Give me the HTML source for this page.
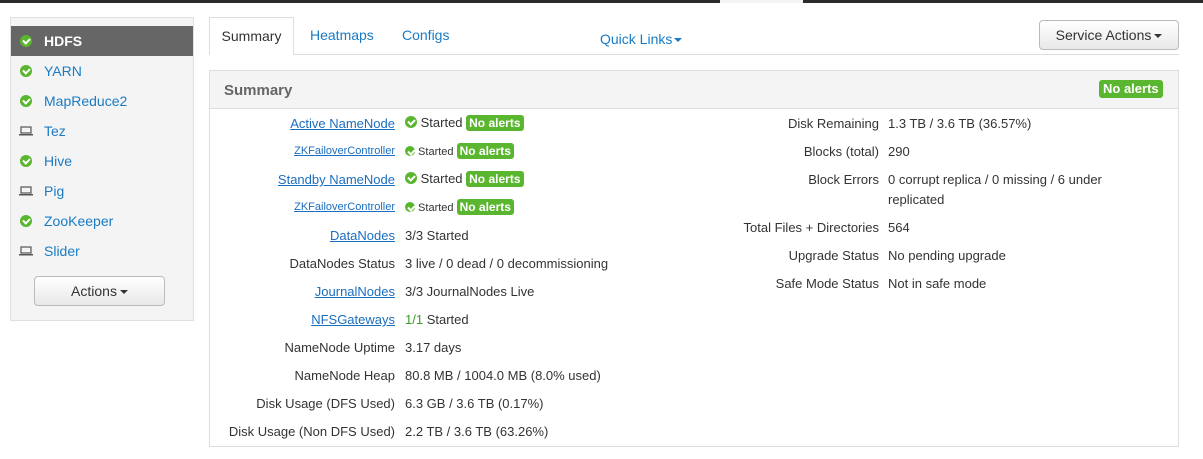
<!DOCTYPE html>
<html><head><style>
*{margin:0;padding:0;box-sizing:border-box}
body{width:1203px;height:459px;background:#fff;font-family:"Liberation Sans",Arial,sans-serif;color:#333;position:relative;overflow:hidden;font-size:13px}
.a{position:absolute;white-space:nowrap}
.lnk{color:#1a6ebf;text-decoration:underline}
.chk{display:inline-block;width:12px;height:12px;border-radius:50%;background:#5ab52f;position:relative;vertical-align:-1px}
.chk:after{content:"";position:absolute;left:3px;top:2.5px;width:5px;height:3px;border-left:2px solid #fff;border-bottom:2px solid #fff;transform:rotate(-45deg)}
.badge{display:inline-block;background:#5ab52f;color:#fff;font-weight:bold;font-size:12px;padding:1px 3px;border-radius:3px;line-height:14px}
.side{position:absolute;left:10px;top:17px;width:184px;height:304px;background:#f4f4f4;border:1px solid #e0e0e0}
.si{position:absolute;left:0;width:182px;height:30px;line-height:30px;font-size:14px;color:#1a7bc4;padding-left:33px}
.si .ic{position:absolute;left:9px;top:9px}
.lap{position:absolute;left:8px;top:10px;width:14px;height:10px}
.btn{position:absolute;border:1px solid #bbb;border-radius:4px;background:linear-gradient(#fff,#e8e8e8);color:#333;font-size:14px;text-align:center}
.caret{display:inline-block;border-left:4px solid transparent;border-right:4px solid transparent;border-top:4px solid #333;vertical-align:2px;margin-left:3px}
.l{position:absolute;text-align:right;white-space:nowrap;left:0;width:395px}
.r{position:absolute;text-align:right;white-space:nowrap;left:0;width:879px}
.v{position:absolute;white-space:nowrap}
</style></head><body>
<div class="a" style="left:0;top:0;width:1203px;height:3px;background:#2b2b2b"></div>
<div class="a" style="left:720px;top:0;width:83px;height:3px;background:#f4f4f4"></div>

<div class="side">
 <div class="si" style="top:8px;background:#666;color:#fff;font-weight:bold"><span class="chk ic"></span>HDFS</div>
 <div class="si" style="top:38px"><span class="chk ic"></span>YARN</div>
 <div class="si" style="top:68px"><span class="chk ic"></span>MapReduce2</div>
 <div class="si" style="top:98px"><svg class="lap" viewBox="0 0 14 10"><rect x="2" y="1" width="10" height="6" fill="none" stroke="#555" stroke-width="1.2"/><rect x="0" y="8" width="14" height="1.5" fill="#555"/></svg>Tez</div>
 <div class="si" style="top:128px"><span class="chk ic"></span>Hive</div>
 <div class="si" style="top:158px"><svg class="lap" viewBox="0 0 14 10"><rect x="2" y="1" width="10" height="6" fill="none" stroke="#555" stroke-width="1.2"/><rect x="0" y="8" width="14" height="1.5" fill="#555"/></svg>Pig</div>
 <div class="si" style="top:188px"><span class="chk ic"></span>ZooKeeper</div>
 <div class="si" style="top:218px"><svg class="lap" viewBox="0 0 14 10"><rect x="2" y="1" width="10" height="6" fill="none" stroke="#555" stroke-width="1.2"/><rect x="0" y="8" width="14" height="1.5" fill="#555"/></svg>Slider</div>
 <div class="btn" style="left:23px;top:258px;width:131px;height:30px;line-height:28px">Actions<span class="caret"></span></div>
</div>

<div class="a" style="left:209px;top:54px;width:970px;height:1px;background:#ddd"></div>
<div class="a" style="left:209px;top:17px;width:85px;height:38px;border:1px solid #ddd;border-bottom:none;background:#fff;font-size:14px;line-height:36px;text-align:center;color:#333">Summary</div>
<div class="a" style="left:310px;top:27px;font-size:14px;color:#1a7bc4">Heatmaps</div>
<div class="a" style="left:402px;top:27px;font-size:14px;color:#1a7bc4">Configs</div>
<div class="a" style="left:600px;top:31px;font-size:14px;color:#1a7bc4">Quick Links<span class="caret" style="border-top-color:#1a7bc4;margin-left:2px"></span></div>
<div class="btn" style="left:1039px;top:20px;width:140px;height:30px;line-height:28px">Service Actions<span class="caret"></span></div>

<div class="a" style="left:209px;top:70px;width:970px;height:377px;border:1px solid #ddd"></div>
<div class="a" style="left:210px;top:71px;width:968px;height:38px;background:#f4f4f4;border-bottom:1px solid #ddd"></div>
<div class="a" style="left:224px;top:82px;font-size:15px;font-weight:bold;color:#666">Summary</div>
<div class="a" style="left:1099px;top:80px"><span class="badge" style="font-size:13px;padding:2px 4px">No alerts</span></div>

<div class="l" style="top:116px"><span class="lnk">Active NameNode</span></div>
<div class="v" style="left:405px;top:115px"><span class="chk"></span> Started <span class="badge">No alerts</span></div>
<div class="l" style="top:145px;font-size:11px"><span class="lnk">ZKFailoverController</span></div>
<div class="v" style="left:405px;top:143px;font-size:11px"><span class="chk" style="width:10px;height:10px"></span> Started <span class="badge">No alerts</span></div>
<div class="l" style="top:172px"><span class="lnk">Standby NameNode</span></div>
<div class="v" style="left:405px;top:171px"><span class="chk"></span> Started <span class="badge">No alerts</span></div>
<div class="l" style="top:201px;font-size:11px"><span class="lnk">ZKFailoverController</span></div>
<div class="v" style="left:405px;top:199px;font-size:11px"><span class="chk" style="width:10px;height:10px"></span> Started <span class="badge">No alerts</span></div>
<div class="l" style="top:228px"><span class="lnk">DataNodes</span></div>
<div class="v" style="left:405px;top:228px">3/3 Started</div>
<div class="l" style="top:256px">DataNodes Status</div>
<div class="v" style="left:405px;top:256px">3 live / 0 dead / 0 decommissioning</div>
<div class="l" style="top:284px"><span class="lnk">JournalNodes</span></div>
<div class="v" style="left:405px;top:284px">3/3 JournalNodes Live</div>
<div class="l" style="top:312px"><span class="lnk">NFSGateways</span></div>
<div class="v" style="left:405px;top:312px"><span style="color:#3a9a2a">1/1</span> Started</div>
<div class="l" style="top:340px">NameNode Uptime</div>
<div class="v" style="left:405px;top:340px">3.17 days</div>
<div class="l" style="top:368px">NameNode Heap</div>
<div class="v" style="left:405px;top:368px">80.8 MB / 1004.0 MB (8.0% used)</div>
<div class="l" style="top:396px">Disk Usage (DFS Used)</div>
<div class="v" style="left:405px;top:396px">6.3 GB / 3.6 TB (0.17%)</div>
<div class="l" style="top:424px">Disk Usage (Non DFS Used)</div>
<div class="v" style="left:405px;top:424px">2.2 TB / 3.6 TB (63.26%)</div>

<div class="r" style="top:116px">Disk Remaining</div>
<div class="v" style="left:888px;top:116px">1.3 TB / 3.6 TB (36.57%)</div>
<div class="r" style="top:144px">Blocks (total)</div>
<div class="v" style="left:888px;top:144px">290</div>
<div class="r" style="top:172px">Block Errors</div>
<div class="v" style="left:888px;top:170px;line-height:20px">0 corrupt replica / 0 missing / 6 under<br>replicated</div>
<div class="r" style="top:220px">Total Files + Directories</div>
<div class="v" style="left:888px;top:220px">564</div>
<div class="r" style="top:248px">Upgrade Status</div>
<div class="v" style="left:888px;top:248px">No pending upgrade</div>
<div class="r" style="top:276px">Safe Mode Status</div>
<div class="v" style="left:888px;top:276px">Not in safe mode</div>
</body></html>
